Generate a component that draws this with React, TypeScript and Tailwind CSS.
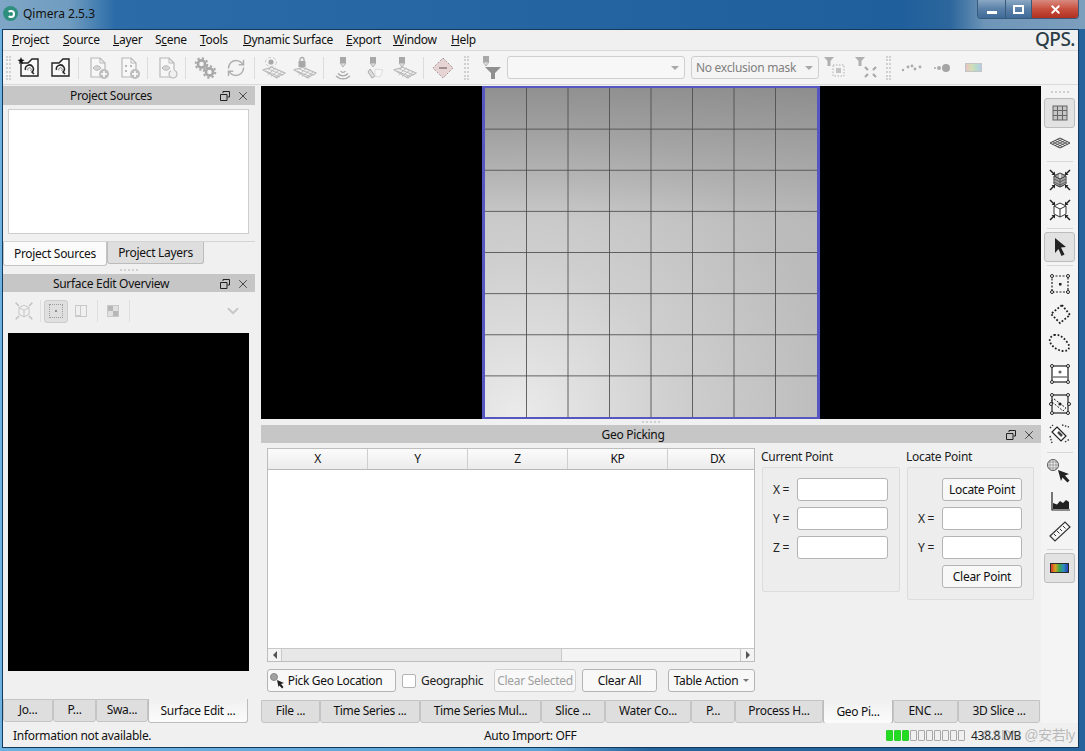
import type { ReactNode } from "react";
import { ChevronDown, RefreshCw, X } from "lucide-react";

const font = "[font-family:'Noto_Sans','Liberation_Sans',sans-serif]";

// --- little svg helpers ---
function Svg({ children, size = 24 }: { children: ReactNode; size?: number }) {
  return (
    <svg width={size} height={size} viewBox="0 0 24 24" fill="none" className="block shrink-0">
      {children}
    </svg>
  );
}

const GR = "#b8b8b8";

function FolderQ({ star }: { star?: boolean }) {
  return (
    <Svg>
      <path d="M4 7h7l4-4h6v17H4z" fill="#fafafa" stroke="#222" strokeWidth="1.4" />
      <path d="M8.500 14a4 4 0 1 1 6.500 2l2 2" stroke="#222" strokeWidth="1.5" />
      <path d="M11 14.500a1.800 1.800 0 1 1 2.500 .5" stroke="#777" strokeWidth="1" />
      {star && <path d="M4 1l1 2.600L7.600 4 5.400 5.600 6 8 4 6.600 2 8l.6-2.400L.6 4 3 3.600z" fill="#111" />}
    </Svg>
  );
}

function Doc({ kind, badge }: { kind: "leaf" | "dots"; badge: "plus" | "ring" }) {
  return (
    <Svg>
      <path d="M5 2h9l5 5v14H5z" fill="#f7f7f7" stroke={GR} strokeWidth="1.2" />
      <path d="M14 2v5h5" stroke={GR} strokeWidth="1" />
      {kind === "leaf" ? (
        <path d="M7 12c2-3 6-3 8 0-2 3-6 3-8 0z" fill="#d5d5d5" stroke={GR} />
      ) : (
        <path d="M8 9l2 2M10 9l-2 2M13 9l2 2M15 9l-2 2M8 14l2 2M10 14l-2 2" stroke={GR} />
      )}
      {badge === "plus" ? (
        <>
          <circle cx="18" cy="18" r="5" fill="#bdbdbd" />
          <path d="M15 18h6M18 15v6" stroke="#fff" strokeWidth="1.6" />
        </>
      ) : (
        <circle cx="18" cy="18" r="4" fill="#f0f0f0" stroke={GR} strokeWidth="1.2" strokeDasharray="16 4" />
      )}
    </Svg>
  );
}

function Gears() {
  return (
    <Svg>
      <circle cx="8.500" cy="8" r="3.600" stroke="#a8a8a8" strokeWidth="2.600" />
      <circle cx="8.500" cy="8" r="5.800" stroke="#a8a8a8" strokeWidth="2" strokeDasharray="2.200 2.300" />
      <circle cx="16.500" cy="16" r="3.600" stroke="#a8a8a8" strokeWidth="2.600" />
      <circle cx="16.500" cy="16" r="5.800" stroke="#a8a8a8" strokeWidth="2" strokeDasharray="2.200 2.300" />
    </Svg>
  );
}

function Pen() {
  return (
    <>
      <rect x="6" y="1" width="6" height="6" fill="#a8a8a8" />
      <path d="M6 7h6l-3 4z" fill="#ddd" stroke="#a8a8a8" strokeWidth="0.8" />
    </>
  );
}

function Swath({ top }: { top?: "orbit" | "lock" | "pen" }) {
  return (
    <Svg>
      <path d="M1 14c3-2 5 0 8-3l14 6c-3 3-5 1-8 5z" fill="#f2f2f2" stroke={GR} strokeWidth="1.1" />
      <path d="M4 15l14 6M6.500 13l14 6M5.500 19l8-7M9 20.500l8-6.500M13 22l7-6" stroke={GR} strokeWidth="0.9" />
      {top === "orbit" && (
        <>
          <circle cx="9" cy="6" r="2.600" fill="#a8a8a8" />
          <ellipse cx="9" cy="6" rx="5.500" ry="4.500" stroke="#c8c8c8" strokeDasharray="3 2" />
        </>
      )}
      {top === "lock" && (
        <>
          <rect x="5.500" y="5" width="7" height="6" fill="#a8a8a8" />
          <path d="M7 5V3.500a2 2 0 0 1 4 0V5" stroke="#a8a8a8" strokeWidth="1.300" />
        </>
      )}
      {top === "pen" && <Pen />}
    </Svg>
  );
}

function PenWaves() {
  return (
    <Svg>
      <g transform="translate(3 0)">
        <Pen />
      </g>
      <path d="M9.500 15a3 3 0 0 0 5 0M7 17.500a6.500 6.500 0 0 0 10 0M5 20a10 10 0 0 0 14 0" stroke="#a8a8a8" strokeWidth="1.200" />
    </Svg>
  );
}

function PenSheet() {
  return (
    <Svg>
      <g transform="translate(2 0)">
        <Pen />
      </g>
      <path d="M8 13l5 7-3 2-4-6z" fill="#ddd" stroke="#aaa" />
      <path d="M13 13l8 1-3 7-5-1z" fill="#f7f7f7" stroke="#ddd" />
    </Svg>
  );
}

function RedDiamond() {
  return (
    <Svg>
      <path d="M12 2l10 10-10 10L2 12z" fill="#e6d3d3" stroke="#a89090" strokeDasharray="2 1.500" />
      <path d="M8 12h8" stroke="#8f8080" strokeWidth="1.600" />
    </Svg>
  );
}

function PenFunnel() {
  return (
    <Svg>
      <g transform="translate(-1 -1)">
        <Pen />
      </g>
      <path d="M7 11h16l-6 6v6h-4v-6z" fill="#8f8f8f" />
    </Svg>
  );
}

function FunnelBox({ variant }: { variant: "box" | "corners" }) {
  return (
    <Svg>
      <path d="M1 1h10L7.500 5v5h-3V5z" fill="#b0b0b0" />
      {variant === "box" ? (
        <>
          <rect x="10" y="9" width="11" height="11" stroke="#b0b0b0" strokeDasharray="1.500 1.500" />
          <rect x="13" y="12" width="5" height="5" fill="#c4c4c4" />
        </>
      ) : (
        <path d="M11 11l3 3M22 11l-3 3M11 21l3-3M22 21l-3-3" stroke="#a8a8a8" strokeWidth="2.200" />
      )}
    </Svg>
  );
}

function Dots({ big }: { big?: boolean }) {
  return (
    <Svg>
      {big ? (
        <>
          <circle cx="4" cy="12" r="1" fill="#aaa" />
          <circle cx="8" cy="12" r="2" fill="#aaa" />
          <circle cx="15" cy="12" r="4" fill="#a5a5a5" />
        </>
      ) : (
        <>
          <circle cx="3" cy="14" r="1.200" fill="#aaa" />
          <circle cx="8" cy="11" r="1.400" fill="#aaa" />
          <circle cx="12" cy="10" r="1.400" fill="#aaa" />
          <circle cx="15" cy="13" r="1.400" fill="#aaa" />
          <circle cx="20" cy="11" r="1.400" fill="#aaa" />
        </>
      )}
    </Svg>
  );
}

function GradientSwatch({ dim }: { dim?: boolean }) {
  return dim ? (
    <div className="h-[9px] w-[17px] border border-[#c4c4c4] bg-[linear-gradient(90deg,#e6c2c2,#d8dcb4,#b8dcc8,#b4cce6)]" />
  ) : (
    <div className="h-[10px] w-[19px] border border-[#2a2a2a] bg-[linear-gradient(90deg,#d6352a,#d8a020,#3aa84a,#2a8ac0,#2540b0)]" />
  );
}

// right bar icons
function GridIcon() {
  return (
    <Svg>
      <rect x="5" y="5" width="14" height="14" fill="#c6c6c6" stroke="#666" />
      <path d="M9.500 5v14M14.500 5v14M5 9.500h14M5 14.500h14" stroke="#666" />
    </Svg>
  );
}

function DiamondGrid() {
  return (
    <Svg>
      <path d="M12 7l10 5-10 5-10-5z" fill="#f4f4f4" stroke="#444" />
      <path d="M7 9.500l10 5M9.500 8.200l10 5M4.500 10.800l10 5M17 9.500l-10 5M14.500 8.200l-10 5M19.500 10.800l-10 5" stroke="#444" strokeWidth="0.8" />
    </Svg>
  );
}

function CornerArrows() {
  return (
    <>
      <path d="M2 2l4 4M22 2l-4 4M2 22l4-4M22 22l-4-4" stroke="#222" strokeWidth="1.500" />
      <path d="M7 7H3.500L7 3.500zM17 7h3.500L17 3.500zM7 17H3.500L7 20.500zM17 17h3.500L17 20.500z" fill="#222" />
    </>
  );
}

function CubeArrows({ mesh }: { mesh?: boolean }) {
  return (
    <Svg>
      <CornerArrows />
      <path d="M12 5l6 3v8l-6 3-6-3V8z" fill={mesh ? "#ddd" : "#fff"} stroke="#333" />
      <path d="M6 8l6 3 6-3M12 11v8" stroke="#333" />
      {mesh && <path d="M8 6v11M10 5.500v13M14 5.500v13M16 6v11M6 11l6 3 6-3M6 14l6 3 6-3" stroke="#444" strokeWidth="0.7" />}
    </Svg>
  );
}

function Cursor() {
  return (
    <Svg>
      <path d="M7 3l11 9-5 .5 3.500 7-3 1.500-3-7L7 18z" fill="#222" />
    </Svg>
  );
}

function Handles({ pts }: { pts: number[][] }) {
  return (
    <>
      {pts.map(([x, y]) => (
        <circle key={`${x}-${y}`} cx={x} cy={y} r="1.500" fill="#fff" stroke="#222" />
      ))}
    </>
  );
}

function RectSelect() {
  return (
    <Svg>
      <rect x="4" y="4" width="16" height="16" stroke="#222" strokeWidth="1.200" strokeDasharray="2 1.500" />
      <rect x="11" y="11" width="2.500" height="2.500" fill="#222" />
      <Handles pts={[[4, 4], [20, 4], [4, 20], [20, 20]]} />
    </Svg>
  );
}

function PolySelect() {
  return (
    <Svg>
      <path d="M14 3l8 10-10 8-9-9z" stroke="#222" strokeWidth="1.800" strokeDasharray="1.800 1.800" />
    </Svg>
  );
}

function LassoSelect() {
  return (
    <Svg>
      <path d="M6 3c5-1 9 2 13 7 4 5 2 9-3 9-6 0-12-4-14-9-1-3 1-6 4-7z" stroke="#222" strokeWidth="1.800" strokeDasharray="1.800 1.800" />
    </Svg>
  );
}

function BoxHandles() {
  return (
    <Svg>
      <rect x="4" y="4" width="16" height="16" fill="#fff" stroke="#222" strokeWidth="1.200" />
      <circle cx="12" cy="10" r="1.600" fill="#666" />
      <path d="M4 15h16" stroke="#777" strokeWidth="1.500" />
      <Handles pts={[[4, 4], [20, 4], [4, 20], [20, 20]]} />
    </Svg>
  );
}

function SkewBox() {
  return (
    <Svg>
      <rect x="4" y="3" width="16" height="18" stroke="#222" strokeWidth="1.200" />
      <path d="M6 7l12 9-3 3L3 9z" stroke="#222" strokeDasharray="2 1.500" />
      <circle cx="12" cy="12" r="1.600" fill="#222" />
      <Handles pts={[[4, 3], [20, 3], [4, 21], [20, 21], [21, 12], [3, 12]]} />
    </Svg>
  );
}

function SkewDots() {
  return (
    <Svg>
      <path d="M9 5l9 9-5 5-9-9z" stroke="#222" strokeWidth="1.200" fill="#fff" />
      <path d="M10 10l4 4" stroke="#444" strokeWidth="2.500" />
      <path d="M14 3l7 2M2 14l2 7M17 20l5-3M2 6l3-3" stroke="#333" strokeWidth="1.400" strokeDasharray="1.500 1.500" />
    </Svg>
  );
}

function GlobeCursor() {
  return (
    <svg width="30" height="28" viewBox="0 0 30 28" fill="none" className="block shrink-0">
      <circle cx="8" cy="8" r="5.500" fill="#eee" stroke="#555" />
      <path d="M2.500 8h11M3.500 5h9M3.500 11h9M8 2.500v11M5 3.500v9M11 3.500v9" stroke="#777" strokeWidth="0.6" />
      <path d="M13 13l11 4-4 1.500 4.500 5-2 2-5-5L16 24z" fill="#222" />
    </svg>
  );
}

function AreaChart() {
  return (
    <Svg>
      <path d="M4 3v18h18" stroke="#222" strokeWidth="1.200" />
      <path d="M5 20v-6l4 1.500 3-3.500 3 2 3-3 3 2v7z" fill="#222" />
    </Svg>
  );
}

function Ruler() {
  return (
    <Svg>
      <path d="M2 17L17 3l5 5L7 22z" fill="#f6f6f6" stroke="#333" strokeWidth="1.200" />
      <path d="M6 15l2 2M9 12l2.500 2.500M12 10l2 2M15 7l2.500 2.500" stroke="#333" />
    </Svg>
  );
}

// --- small ui parts ---
function Handle({ className = "" }: { className?: string }) {
  return <div className={`h-[24px] w-[5px] border-x-2 border-dotted border-[#d0d0d0] ${className}`} />;
}

function Sep() {
  return (
    <div className="flex w-[7px] shrink-0 justify-center">
      <div className="h-[22px] w-px bg-[#dcdcdc]" />
    </div>
  );
}

function Tool({ children }: { children: ReactNode }) {
  return <div className="flex h-[30px] w-[31px] shrink-0 items-center justify-center">{children}</div>;
}

function VTool({ children, pressed }: { children: ReactNode; pressed?: boolean }) {
  return (
    <div
      className={`flex h-[30px] w-[31px] shrink-0 items-center justify-center rounded-[3px] ${
        pressed ? "border border-[#bdbdbd] bg-[#e2e2e2]" : ""
      }`}
    >
      {children}
    </div>
  );
}

function VSep() {
  return (
    <div className="flex h-[7px] w-full shrink-0 items-center justify-center">
      <div className="h-px w-[26px] bg-[#d8d8d8]" />
    </div>
  );
}

function DockTitle({ title, tall }: { title: string; tall?: boolean }) {
  return (
    <div className={`flex shrink-0 items-center bg-[#c6c6c6] pr-[5px] ${tall ? "h-[19px]" : "h-[18px] pt-px"}`}>
      <span className="flex-1 text-center text-[12px] leading-none text-[#111]">{title}</span>
      <svg width="12" height="12" viewBox="0 0 12 12" fill="none" className="mr-[5px] block shrink-0">
        <path d="M4 3V1.500h6.500V7H8.500M1.500 4.500h6.500v6H1.500z" stroke="#222" />
      </svg>
      <X size={14} strokeWidth={1.2} color="#111" />
    </div>
  );
}

type TabDef = { label: string; w: number; active?: boolean };

function TabBar({ tabs }: { tabs: TabDef[] }) {
  return (
    <div className="flex h-[24px] shrink-0 items-start">
      {tabs.map((t) => (
        <div
          key={t.label}
          style={{ width: t.w }}
          className={
            t.active
              ? "flex h-[24px] shrink-0 items-center justify-center whitespace-nowrap rounded-b-[3px] border-x border-b border-[#bcbcbc] bg-[linear-gradient(#f0f0f0,#fcfcfc)] text-[12px] text-[#111]"
              : "flex h-[23px] shrink-0 items-center justify-center whitespace-nowrap rounded-b-[3px] border border-[#c4c4c4] bg-[#dedede] pb-px text-[12px] text-[#111]"
          }
        >
          {t.label}
        </div>
      ))}
    </div>
  );
}

function Btn({ children, w, disabled }: { children: ReactNode; w: number; disabled?: boolean }) {
  return (
    <div
      style={{ width: w }}
      className={`flex h-[23px] shrink-0 items-center justify-center whitespace-nowrap rounded-[3px] border border-[#b4b4b4] bg-[#f8f8f8] text-[12px] ${
        disabled ? "border-[#d0d0d0] text-[#a0a0a0]" : "text-[#111]"
      }`}
    >
      {children}
    </div>
  );
}

function Input({ w }: { w: number }) {
  return <div style={{ width: w }} className="h-[23px] shrink-0 rounded-[3px] border border-[#b4b4b4] bg-white" />;
}

function Field({ label, w }: { label: string; w: number }) {
  return (
    <div className="flex items-center justify-end gap-[8px]">
      <span className="pt-px text-[12px] text-[#222]">{label}</span>
      <Input w={w} />
    </div>
  );
}

const menus: { pre: string; u: string; post: string; w: number }[] = [
  { pre: "", u: "P", post: "roject", w: 51 },
  { pre: "", u: "S", post: "ource", w: 50 },
  { pre: "", u: "L", post: "ayer", w: 42 },
  { pre: "S", u: "c", post: "ene", w: 45 },
  { pre: "", u: "T", post: "ools", w: 43 },
  { pre: "", u: "D", post: "ynamic Surface", w: 103 },
  { pre: "", u: "E", post: "xport", w: 47 },
  { pre: "", u: "W", post: "indow", w: 58 },
  { pre: "", u: "H", post: "elp", w: 40 },
];

const leftTabs: TabDef[] = [
  { label: "Jo...", w: 50 },
  { label: "P...", w: 43 },
  { label: "Swa...", w: 52 },
  { label: "Surface Edit ...", w: 100, active: true },
];

const centerTabs: TabDef[] = [
  { label: "File ...", w: 59 },
  { label: "Time Series ...", w: 100 },
  { label: "Time Series Mul...", w: 121 },
  { label: "Slice ...", w: 64 },
  { label: "Water Co...", w: 86 },
  { label: "P...", w: 44 },
  { label: "Process H...", w: 88 },
  { label: "Geo Pi...", w: 70, active: true },
  { label: "ENC ...", w: 65 },
  { label: "3D Slice ...", w: 82 },
];

export default function App() {
  return (
    <div
      className={`${font} flex h-[751px] w-[1085px] flex-col overflow-hidden bg-[linear-gradient(90deg,#6cb2e0_0%,#5aa4d8_50%,#24639c_60%,#24639c_100%)] text-[12px] tracking-[-0.3px]`}
    >
      {/* title bar */}
      <div className="flex h-[29px] shrink-0 items-start bg-[linear-gradient(90deg,#7fa6c6_0px,#6f9cc0_70px,#2b6ca8_115px,#1f5f9c_900px,#2c669c_950px,#6e95b8_985px,#7d9fbe_1085px)]">
        <div className="ml-[3px] mt-[6px] flex h-[15px] w-[15px] items-center justify-center rounded-full bg-[#2f8f7f]">
          <div className="h-[8px] w-[8px] rounded-full border-2 border-white border-l-transparent" />
        </div>
        <span className="ml-[5px] mt-[5px] text-[12px] leading-[18px] tracking-normal text-[#111]">Qimera 2.5.3</span>
        <div className="ml-auto mr-[6px] flex h-[19px] overflow-hidden rounded-b-[4px] border-x border-b border-[#3a5a7a]">
          <div className="flex w-[28px] items-center justify-center border-r border-[#3a5a7a] bg-[linear-gradient(#8aa8c4,#5a80a8_50%,#3f6a98)]">
            <div className="mt-[6px] h-[3px] w-[10px] bg-white" />
          </div>
          <div className="flex w-[26px] items-center justify-center border-r border-[#3a5a7a] bg-[linear-gradient(#8aa8c4,#5a80a8_50%,#3f6a98)]">
            <div className="h-[9px] w-[11px] border-2 border-white" />
          </div>
          <div className="flex w-[46px] items-center justify-center bg-[linear-gradient(#d88a80,#c8503f_50%,#b03020)]">
            <X size={13} strokeWidth={3.5} color="#fff" />
          </div>
        </div>
      </div>

      {/* client area */}
      <div className="ml-[2px] mr-[6px] flex h-[719px] shrink-0 flex-col border border-[#14395c] bg-[#f0f0f0]">
        {/* menu */}
        <div className="flex h-[20px] shrink-0 items-center bg-[#f0f0f0] pb-px pl-[9px]">
          {menus.map((m) => (
            <div key={m.post} style={{ width: m.w }} className="shrink-0 whitespace-nowrap text-[12px] text-[#111]">
              {m.pre}
              <span className="underline">{m.u}</span>
              {m.post}
            </div>
          ))}
          <div className="ml-auto mr-[3px] text-[19px] font-medium leading-none tracking-[-0.5px] text-[#2c3e48]">QPS.</div>
        </div>

        {/* toolbar */}
        <div className="flex h-[35px] shrink-0 items-center border-y border-[#dadada] bg-[#f4f4f4] pl-[3px]">
          <Handle className="mr-[2px]" />
          <Tool><FolderQ star /></Tool>
          <Tool><FolderQ /></Tool>
          <Sep />
          <Tool><Doc kind="leaf" badge="plus" /></Tool>
          <Tool><Doc kind="dots" badge="plus" /></Tool>
          <Sep />
          <Tool><Doc kind="leaf" badge="ring" /></Tool>
          <Sep />
          <Tool><Gears /></Tool>
          <Tool><RefreshCw size={20} strokeWidth={1.8} color="#b0b0b0" /></Tool>
          <Sep />
          <Tool><Swath top="orbit" /></Tool>
          <Tool><Swath top="lock" /></Tool>
          <Sep />
          <Tool><PenWaves /></Tool>
          <Tool><PenSheet /></Tool>
          <Tool><Swath top="pen" /></Tool>
          <Sep />
          <Tool><RedDiamond /></Tool>
          <div className="flex w-[16px] shrink-0 justify-center">
            <Handle />
          </div>
          <Tool><PenFunnel /></Tool>
          <div className="ml-[2px] flex h-[23px] w-[178px] shrink-0 items-center justify-end rounded-[3px] border border-[#cfcfcf] bg-[#f7f7f7] pr-[5px]">
            <div className="h-0 w-0 border-x-[4px] border-t-[4px] border-x-transparent border-t-[#a8a8a8]" />
          </div>
          <div className="ml-[6px] flex h-[23px] w-[128px] shrink-0 items-center justify-between rounded-[3px] border border-[#cfcfcf] bg-[#f4f4f4] pl-[4px] pr-[5px] text-[12px] text-[#808080]">
            No exclusion mask
            <div className="h-0 w-0 border-x-[4px] border-t-[4px] border-x-transparent border-t-[#a8a8a8]" />
          </div>
          <Tool><FunnelBox variant="box" /></Tool>
          <Tool><FunnelBox variant="corners" /></Tool>
          <div className="flex w-[15px] shrink-0 justify-center">
            <Handle />
          </div>
          <Tool><Dots /></Tool>
          <Tool><Dots big /></Tool>
          <Tool><GradientSwatch dim /></Tool>
        </div>

        {/* main row */}
        <div className="flex min-h-0 flex-1">
          {/* left docks */}
          <div className="flex w-[252px] shrink-0 flex-col pt-px">
            <DockTitle title="Project Sources" tall />
            <div className="ml-[5px] mt-[4px] h-[125px] w-[241px] shrink-0 border border-[#cdcdcd] bg-white" />
            <div className="mt-[7px] flex h-[24px] shrink-0 items-start border-t border-[#d4d4d4]">
              <div className="flex h-[24px] w-[104px] items-center justify-center rounded-b-[3px] border-x border-b border-[#c4c4c4] bg-[#fbfbfb] text-[12px] text-[#111]">
                Project Sources
              </div>
              <div className="flex h-[22px] w-[97px] items-center justify-center rounded-b-[3px] border-x border-b border-[#bcbcbc] bg-[#dedede] text-[12px] text-[#111]">
                Project Layers
              </div>
            </div>
            <div className="flex h-[9px] shrink-0 items-center justify-center">
              <div className="h-[2px] w-[18px] border-t-2 border-dotted border-[#d0d0d0]" />
            </div>
            <DockTitle title="Surface Edit Overview" />
            {/* overview tools */}
            <div className="mt-[4px] flex h-[30px] shrink-0 items-center pl-[5px] pr-[13px] opacity-80">
              <div className="flex w-[32px] shrink-0 justify-center">
                <svg width="20" height="20" viewBox="0 0 24 24" fill="none">
                  <path d="M12 5l6 3v8l-6 3-6-3V8zM6 8l6 3 6-3M12 11v8" stroke="#b5b5b5" />
                  <path d="M2 2l4 4M22 2l-4 4M2 22l4-4M22 22l-4-4" stroke="#b5b5b5" strokeWidth="1.800" />
                </svg>
              </div>
              <div className="h-[22px] w-px bg-[#dcdcdc]" />
              <div className="ml-[3px] flex h-[23px] w-[24px] items-center justify-center rounded-[3px] border border-[#c4c4c4] bg-[#dcdcdc]">
                <div className="flex h-[14px] w-[14px] items-center justify-center border border-dotted border-[#888]">
                  <div className="h-[2px] w-[2px] bg-[#777]" />
                </div>
              </div>
              <div className="ml-[7px] grid h-[12px] w-[12px] grid-cols-2 border border-[#c0c0c0]">
                <div className="border-b border-r border-[#c0c0c0]" />
              </div>
              <div className="ml-[10px] h-[22px] w-px bg-[#dcdcdc]" />
              <div className="ml-[9px] grid h-[12px] w-[12px] grid-cols-2 border border-[#c0c0c0]">
                <div className="bg-[#aaa]" />
                <div className="bg-[#ddd]" />
                <div className="bg-[#ddd]" />
                <div className="bg-[#aaa]" />
              </div>
              <div className="ml-[10px] h-[22px] w-px bg-[#dcdcdc]" />
              <ChevronDown size={18} strokeWidth={2.5} color="#bdbdbd" className="ml-auto" />
            </div>
            <div className="ml-[5px] mt-[7px] h-[338px] w-[241px] shrink-0 bg-black" />
            <div className="mt-auto">
              <TabBar tabs={leftTabs} />
            </div>
          </div>

          {/* splitter */}
          <div className="w-[6px] shrink-0" />

          {/* center */}
          <div className="flex w-[780px] shrink-0 flex-col pt-px">
            {/* 3D view */}
            <div className="flex h-[333px] shrink-0 justify-center bg-black">
              <div className="relative h-full w-[338px] border-x-[3px] border-y-2 border-[#5656c0] bg-[linear-gradient(180deg,rgba(110,110,110,0.55)_0%,rgba(130,130,130,0)_40%),radial-gradient(circle_at_10%_100%,#ebebeb_0%,#cfcfcf_35%,#bcbcbc_70%,#b4b4b4_100%)]">
                <svg viewBox="0 0 332 329" preserveAspectRatio="none" className="absolute inset-0 h-full w-full">
                  {[1, 2, 3, 4, 5, 6, 7].map((i) => (
                    <g key={i} stroke="#4c4c4c" strokeOpacity="0.85" strokeWidth="1">
                      <line x1={(i * 332) / 8} y1="0" x2={(i * 332) / 8} y2="329" />
                      <line x1="0" y1={(i * 329) / 8} x2="332" y2={(i * 329) / 8} />
                    </g>
                  ))}
                </svg>
              </div>
            </div>
            <div className="flex h-[6px] shrink-0 items-center justify-center">
              <div className="h-[2px] w-[18px] border-t-2 border-dotted border-[#d0d0d0]" />
            </div>
            <DockTitle title="Geo Picking" />

            {/* geo picking */}
            <div className="ml-[6px] mt-[5px] flex h-[252px] shrink-0 items-start">
              <div className="flex w-[488px] shrink-0 flex-col">
                <div className="flex h-[214px] flex-col border border-[#bdbdbd] bg-white">
                  <div className="flex h-[21px] shrink-0 overflow-hidden border-b border-[#b8b8b8] bg-[linear-gradient(#fbfbfb,#ececec)]">
                    {["X", "Y", "Z", "KP", "DX"].map((c) => (
                      <div
                        key={c}
                        className="flex w-[100px] shrink-0 items-center justify-center border-r border-[#cfcfcf] text-[12px] text-[#111]"
                      >
                        {c}
                      </div>
                    ))}
                  </div>
                  <div className="flex-1" />
                  <div className="flex h-[13px] shrink-0 border-t border-[#c8c8c8] bg-[#f4f4f4]">
                    <div className="flex w-[14px] items-center justify-center border-r border-[#c8c8c8]">
                      <div className="h-0 w-0 border-y-[4px] border-r-[4px] border-y-transparent border-r-[#555]" />
                    </div>
                    <div className="w-[280px] border-r border-[#c8c8c8] bg-[#e8e8e8]" />
                    <div className="flex-1" />
                    <div className="flex w-[14px] items-center justify-center border-l border-[#c8c8c8]">
                      <div className="h-0 w-0 border-y-[4px] border-l-[4px] border-y-transparent border-l-[#555]" />
                    </div>
                  </div>
                </div>
                <div className="mt-[7px] flex h-[23px] items-center">
                  <Btn w={129}>
                    <svg width="18" height="18" viewBox="0 0 18 18" fill="none" className="ml-[-8px] mr-px block shrink-0">
                      <circle cx="5" cy="5" r="3.500" fill="#a0a0a0" stroke="#888" />
                      <path d="M8 8l7 3-3 1 2.500 3-1.500 1.500-2.500-3L9.500 15z" fill="#222" />
                    </svg>
                    <span className="mr-[4px]">Pick Geo Location</span>
                  </Btn>
                  <div className="ml-[6px] h-[14px] w-[14px] shrink-0 rounded-[2px] border border-[#b4b4b4] bg-white" />
                  <span className="ml-[5px] whitespace-nowrap text-[12px] text-[#222]">Geographic</span>
                  <div className="ml-auto flex gap-[6px]">
                    <Btn w={82} disabled>Clear Selected</Btn>
                    <Btn w={75}>Clear All</Btn>
                  </div>
                  <div className="ml-[11px]">
                    <Btn w={87}>
                      Table Action
                      <div className="ml-[5px] h-0 w-0 border-x-[3px] border-t-[3px] border-x-transparent border-t-[#777]" />
                    </Btn>
                  </div>
                </div>
              </div>

              {/* current point */}
              <div className="ml-[6px] w-[140px] shrink-0">
                <div className="h-[19px] text-[12px] leading-[17px] text-[#222]">Current Point</div>
                <div className="ml-px flex h-[125px] w-[138px] flex-col gap-[6px] rounded-[2px] border border-[#dcdcdc] bg-[#ededed] pr-[11px] pt-[10px]">
                  <Field label="X =" w={91} />
                  <Field label="Y =" w={91} />
                  <Field label="Z =" w={91} />
                </div>
              </div>

              {/* locate point */}
              <div className="ml-[5px] w-[129px] shrink-0">
                <div className="h-[19px] text-[12px] leading-[17px] text-[#222]">Locate Point</div>
                <div className="ml-px flex h-[133px] w-[127px] flex-col items-end gap-[6px] rounded-[2px] border border-[#dcdcdc] bg-[#ededed] pr-[11px] pt-[10px]">
                  <Btn w={80}>Locate Point</Btn>
                  <Field label="X =" w={80} />
                  <Field label="Y =" w={80} />
                  <Btn w={80}>Clear Point</Btn>
                </div>
              </div>
            </div>

            <div className="mt-auto">
              <TabBar tabs={centerTabs} />
            </div>
          </div>

          {/* right toolbar */}
          <div className="flex min-w-0 flex-1 flex-col items-center bg-[#f4f4f4] pt-px">
            <div className="mb-[4px] mt-[5px] h-[3px] w-[18px] shrink-0 border-t-2 border-dotted border-[#d0d0d0]" />
            <VTool pressed><GridIcon /></VTool>
            <VTool><DiamondGrid /></VTool>
            <VSep />
            <VTool><CubeArrows mesh /></VTool>
            <VTool><CubeArrows /></VTool>
            <VSep />
            <VTool pressed><Cursor /></VTool>
            <VSep />
            <VTool><RectSelect /></VTool>
            <VTool><PolySelect /></VTool>
            <VTool><LassoSelect /></VTool>
            <VTool><BoxHandles /></VTool>
            <VTool><SkewBox /></VTool>
            <VTool><SkewDots /></VTool>
            <VSep />
            <VTool><GlobeCursor /></VTool>
            <VTool><AreaChart /></VTool>
            <VTool><Ruler /></VTool>
            <VSep />
            <VTool pressed><GradientSwatch /></VTool>
          </div>
        </div>

        {/* status bar */}
        <div className="relative flex h-[24px] shrink-0 items-center bg-[#f0f0f0] pl-[10px] pt-px text-[12px] text-[#111]">
          <span className="w-[471px] shrink-0">Information not available.</span>
          <span>Auto Import: OFF</span>
          <div className="ml-auto mr-[4px] flex items-center">
            <div className="flex gap-px">
              {[0, 1, 2, 3, 4, 5, 6, 7, 8, 9].map((i) => (
                <div
                  key={i}
                  className={`h-[11px] w-[7px] rounded-[1px] border ${
                    i < 3 ? "border-[#2ecc2e] bg-[#22dd22]" : "border-[#a8a8a8] bg-[#f0f0f0]"
                  }`}
                />
              ))}
            </div>
            <span className="ml-[6px] w-[103px] whitespace-nowrap text-[12px] text-[#222]">438.8 MB</span>
          </div>
          <span className="absolute right-[3px] top-[2px] whitespace-nowrap text-[14px] text-[#808080]/50 [font-family:'Liberation_Sans','Noto_Sans_CJK_SC',sans-serif]">
            CSDN @安若ly
          </span>
        </div>
      </div>
    </div>
  );
}
